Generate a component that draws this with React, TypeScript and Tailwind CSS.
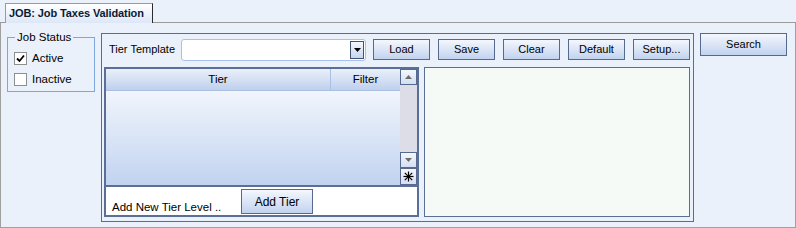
import React from 'react';

const btn =
  'h-[21px] w-[57px] border border-[#56698f] bg-gradient-to-b from-[#f4f7fd] to-[#c2d3ef] text-[11px] text-black flex items-center justify-center';

const Checkbox = ({ checked, label }: { checked?: boolean; label: string }) => (
  <div className="flex items-center h-[21px]">
    <div className="w-[13px] h-[13px] border border-[#8e8f8f] bg-white flex items-center justify-center">
      {checked && (
        <svg width="9" height="9" viewBox="0 0 9 9">
          <polyline points="1,4.5 3.5,7 8,1.5" fill="none" stroke="#000" strokeWidth="1.8" />
        </svg>
      )}
    </div>
    <span className="ml-[5px] text-[11.5px] text-black">{label}</span>
  </div>
);

const ScrollBtn = ({ children }: { children: React.ReactNode }) => (
  <div className="h-[16px] w-full border border-[#56698f] bg-gradient-to-b from-[#f4f7fd] to-[#d3dff3] flex items-center justify-center">
    {children}
  </div>
);

export default function App() {
  return (
    <div
      className="w-[796px] h-[228px] bg-[#eaf1fb] flex flex-col"
      style={{ fontFamily: '"Liberation Sans", Arial, sans-serif' }}
    >
      {/* Tab strip */}
      <div className="h-[23px] flex items-end">
        <div className="w-[5px] h-px bg-[#9a9a9a]" />
        <div className="h-[20px] w-[148px] border-t border-l border-r border-[#9a9a9a] border-r-[#2b2b2b] bg-gradient-to-b from-[#ffffff] to-[#dce7f7] flex items-center pl-[3px]">
          <span className="text-[11px] font-bold text-[#0b1a33] tracking-[-0.1px]">JOB: Job Taxes Validation</span>
        </div>
        <div className="flex-1 h-px bg-[#9a9a9a]" />
      </div>

      {/* Content frame */}
      <div className="flex-1 border-l border-r border-b border-[#a0a0a0] flex items-start pl-[6px] pt-[10px]">
        {/* Job Status */}
        <div className="mt-[4px] w-[88px] h-[55px] border border-[#7ea8dc] pl-[6px] flex flex-col items-start">
          <span className="-mt-[7px] ml-[1px] px-[2px] bg-[#eaf1fb] text-[11.5px] leading-[13px] text-black">Job Status</span>
          <div className="mt-[4px]">
            <Checkbox checked label="Active" />
            <Checkbox label="Inactive" />
          </div>
        </div>

        {/* Middle panel */}
        <div className="ml-[6px] w-[593px] h-[189px] border border-[#6b6b6b] pl-[2px] pt-[5px] flex flex-col">
          <div className="flex items-center h-[21px]">
            <span className="ml-[5px] w-[72px] text-[11px] text-black">Tier Template</span>
            <div className="w-[185px] h-[22px] rounded-[3px] border border-[#a7c2ea] bg-white flex items-center justify-end pr-[1px]">
              <div className="w-[14px] h-[18px] border border-[#44546f] bg-gradient-to-b from-[#f4f7fd] to-[#c6d6f0] flex items-center justify-center">
                <svg width="7" height="4" viewBox="0 0 7 4">
                  <polygon points="0,0 7,0 3.5,4" fill="#000" />
                </svg>
              </div>
            </div>
            <div className="flex gap-[8px] ml-[7px]">
              <div className={btn}>Load</div>
              <div className={btn}>Save</div>
              <div className={btn}>Clear</div>
              <div className={btn}>Default</div>
              <div className={btn}>Setup...</div>
            </div>
          </div>

          <div className="flex mt-[7px]">
            {/* Grid */}
            <div className="w-[315px] h-[150px] border-2 border-[#5b6f96] flex flex-col">
              <div className="flex h-[116px]">
                <div className="w-[294px] flex flex-col">
                  <div className="h-[22px] flex border-b border-[#a9bfe4] bg-gradient-to-b from-[#eaf0fa] to-[#bfd0ed]">
                    <div className="w-[225px] border-r border-[#a9bfe4] flex items-center justify-center text-[11.5px] text-black">Tier</div>
                    <div className="flex-1 flex items-center justify-center text-[11.5px] text-black">Filter</div>
                  </div>
                  <div className="flex-1 bg-gradient-to-b from-[#f1f5fc] to-[#c1d3f0]" />
                </div>
                <div className="w-[17px] flex flex-col bg-[#dcdde6]">
                  <ScrollBtn>
                    <svg width="7" height="4" viewBox="0 0 7 4">
                      <polygon points="0,4 7,4 3.5,0" fill="#6d6d6d" />
                    </svg>
                  </ScrollBtn>
                  <div className="flex-1" />
                  <ScrollBtn>
                    <svg width="7" height="4" viewBox="0 0 7 4">
                      <polygon points="0,0 7,0 3.5,4" fill="#6d6d6d" />
                    </svg>
                  </ScrollBtn>
                  <div className="h-[17px] border border-[#56698f] bg-gradient-to-b from-[#f4f7fd] to-[#d3dff3] flex items-center justify-center">
                    <svg width="11" height="11" viewBox="0 0 11 11" stroke="#000" strokeWidth="1.2">
                      <line x1="5.5" y1="0.5" x2="5.5" y2="10.5" />
                      <line x1="0.5" y1="5.5" x2="10.5" y2="5.5" />
                      <line x1="1.8" y1="1.8" x2="9.2" y2="9.2" />
                      <line x1="9.2" y1="1.8" x2="1.8" y2="9.2" />
                    </svg>
                  </div>
                </div>
              </div>
              <div className="flex-1 border-t-2 border-[#5b6f96] bg-white flex items-end pb-[1px]">
                <span className="ml-[6px] w-[129px] leading-[14px] text-[11.5px] text-black">Add New Tier Level ..</span>
                <div className="w-[72px] h-[25px] border border-[#56698f] bg-gradient-to-b from-[#f4f7fd] to-[#c2d3ef] flex items-center justify-center text-[12px] text-black">
                  Add Tier
                </div>
              </div>
            </div>
            {/* Right panel */}
            <div className="ml-[5px] w-[266px] h-[150px] border border-[#5b6f96] bg-[#f6faf6]" />
          </div>
        </div>

        {/* Search */}
        <div className="ml-[6px] w-[87px] h-[23px] border border-[#56698f] bg-gradient-to-b from-[#f4f7fd] to-[#c2d3ef] flex items-center justify-center text-[11px] text-black">
          Search
        </div>
      </div>
    </div>
  );
}
